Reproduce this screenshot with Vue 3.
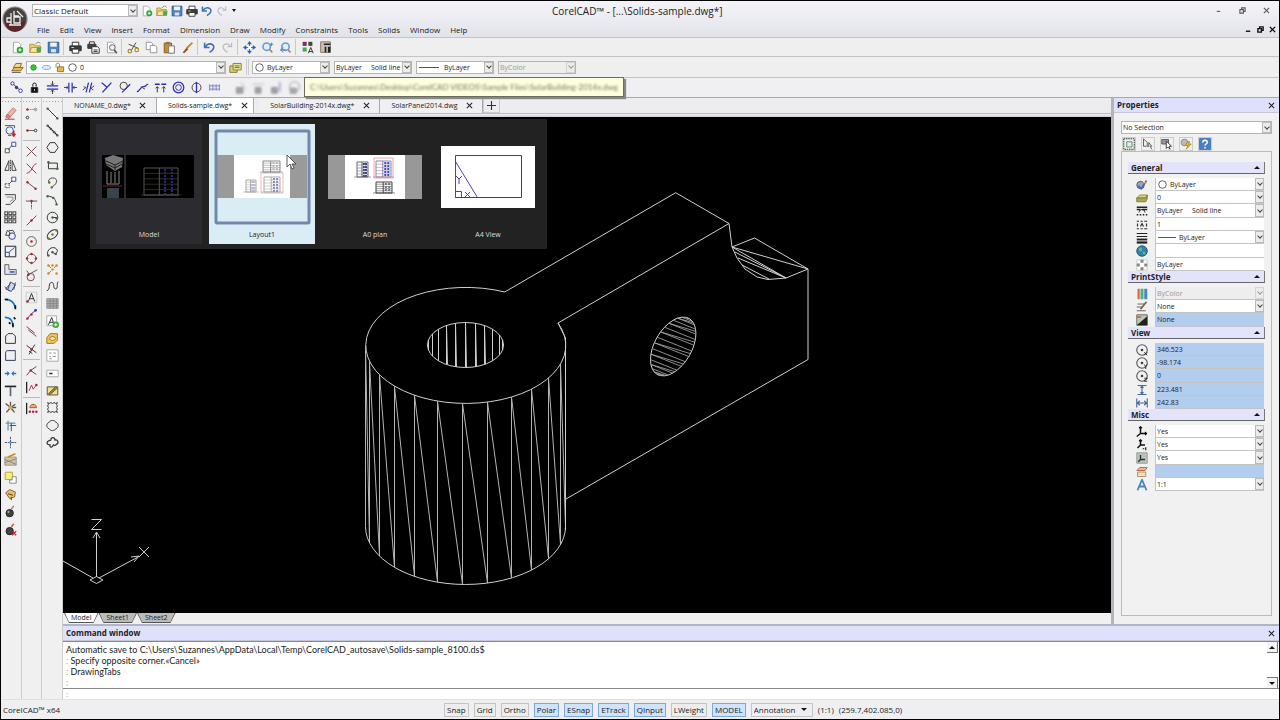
<script setup>
const menus = ['File', 'Edit', 'View', 'Insert', 'Format', 'Dimension', 'Draw', 'Modify', 'Constraints', 'Tools', 'Solids', 'Window', 'Help']

const page = '<path d="M3 1.5h6l3 3v10H3z" fill="#fff" stroke="#a9a9a9"/>'
const dots = (list, color) => list.map(([x, y]) => `<circle cx="${x}" cy="${y}" r="1.5" fill="${color}" stroke="none"/>`).join('')

const icons = {
  new: page + '<circle cx="11" cy="11" r="4" fill="#2fa33c" stroke="none"/><path d="M11 9v4M9 11h4" stroke="#fff"/>',
  open: '<path d="M1 4h5l1 2h7v8H1z" fill="#e8cf78" stroke="#b79a3e"/><path d="M3 8h12l-2 6H1z" fill="#f5e6a8" stroke="#b79a3e"/><circle cx="12" cy="11" r="3" fill="#4aa84a" stroke="none"/><path d="M8 4c2-3 4-3 6-1" stroke="#777"/>',
  save: '<path d="M1.5 1.5h13v13h-13z" fill="#4f86bd" stroke="#2c5f94"/><path d="M4 2h8v5H4z" fill="#eef5fb" stroke="none"/><path d="M5 10h6v4H5z" fill="#dce6ef" stroke="none"/>',
  print: '<path d="M4 6V1.5h8V6" fill="#fff"/><path d="M1 6h14v6H1z" fill="#3c3c3c"/><path d="M4 10h8v5H4z" fill="#fff"/><path d="M3 8h3" stroke="#ddd"/>',
  batch: '<path d="M3 4V1h6v3" fill="#fff"/><path d="M1 4h10v5H1z" fill="#444"/><path d="M6 7h7l2 2v6H6z" fill="#fff"/><path d="M8 11h5M8 13h5"/>',
  preview: page + '<circle cx="9" cy="8" r="3.5" stroke="#666" fill="#eef"/><path d="M11.5 11l3 4" stroke="#555" stroke-width="2"/>',
  cut: '<path d="M2 4l12 5M5 12l6-10" stroke="#4c4c44"/><circle cx="3.5" cy="12.5" r="2.2" stroke="#b18b2c" stroke-width="1.5"/><circle cx="12" cy="11" r="2.2" stroke="#b18b2c" stroke-width="1.5"/>',
  copy: '<path d="M1.5 1.5h6l2 2v7h-8z" fill="#fff" stroke="#999"/><path d="M6.5 5.5h6l2 2v7h-8z" fill="#fff" stroke="#999"/>',
  paste: '<path d="M1.5 2.5h9v12h-9z" fill="#c98d2b" stroke="#8c5d14"/><path d="M4 1h4v3H4z" fill="#777" stroke="none"/><path d="M7 6h7v9H7z" fill="#fff" stroke="#777"/>',
  brush: '<path d="M14 2L7 9" stroke="#c98b32" stroke-width="2.5"/><path d="M7 8l-5 6 2 1 5-5z" fill="#8b5a2b" stroke="none"/>',
  undo: '<path d="M2 2v6h6" stroke="#3b6fb5" stroke-width="2"/><path d="M3 7c4-6 12-3 10 2-1 3-3 4-5 5" stroke="#3b6fb5" stroke-width="2"/>',
  redo: '<path d="M13 2v5H8" stroke="#b9bcc2" stroke-width="1.5"/><path d="M12 7C8 1 1 4 3 9c1 3 3 4 5 5" stroke="#b9bcc2" stroke-width="1.5"/>',
  pan: '<path d="M8 1v14M1 8h14" stroke="#2a62b8"/><path d="M8 0l3 4H5zM8 16l3-4H5zM0 8l4-3v6zM16 8l-4-3v6z" fill="#2a62b8" stroke="none"/><path d="M6 6h4v4H6z" fill="#fff" stroke="none"/>',
  zoom: '<circle cx="7" cy="7" r="4.5" stroke="#6b9bd4" fill="#e2f0fc" stroke-width="2"/><path d="M10.5 10.5L14 14" stroke="#c47b4a" stroke-width="2"/><path d="M13 2v4M11 4h4" stroke="#4b83c4"/>',
  zoomPrev: '<circle cx="8" cy="7" r="4.5" stroke="#6b9bd4" fill="#e2f0fc" stroke-width="2"/><path d="M11 10.5L14 14" stroke="#c47b4a" stroke-width="2"/><path d="M2 11h6M2 11l3-3M2 11l3 3" stroke="#3b6fb5"/>',
  props: '<path d="M2 1h5v5H2z" fill="#7a2d6b" stroke="none"/><path d="M9 1h5v5H9z" fill="#444" stroke="none"/><path d="M2 8h5v5H2z" fill="#4aa84a" stroke="none"/><path d="M9 15l3-7 3 7M10 13h4" stroke="#333"/>',
  palette: '<path d="M2 1h12v13H2z" fill="#c9bfb2" stroke="#8a7c6a"/><path d="M6 3h8v2H6zM7 7h2v7H7zM11 7h3v7h-3z" fill="#222" stroke="none"/>',
  layers: '<path d="M1 12l3-4h11l-3 4z" fill="#e0b85a" stroke="#8a6a20"/><path d="M3 8l3-5h7l-2 5z" fill="#f2d58c" stroke="#8a6a20"/><path d="M1 14h11" stroke="#555"/>',
  layerTool: '<path d="M1 6h9v8H1z" fill="#d6cf7c" stroke="#8a8030"/><path d="M5 3h10v8H5z" fill="#e8e2a0" stroke="#8a8030"/><path d="M7 6h6M7 8h6" stroke="#4a8a4a"/>',
  oval: '<ellipse cx="8" cy="8" rx="6" ry="3" fill="#d5edf8" stroke="#6aa5cc"/>',
  unlock: '<path d="M5 7h9v7H5z" fill="#e5b94d" stroke="#8c6a1c"/><path d="M3 8V4c0-3 5-3 5 0v3" stroke="#7b6a3a"/>',
  circle: '<circle cx="8" cy="8" r="5.5" fill="#fff" stroke="#444"/>',
  green: '<circle cx="8" cy="8" r="4" fill="#37c53e" stroke="#158c20"/>',
  c1: '<path d="M2 2l12 11" stroke="#3333aa"/><circle cx="3" cy="3" r="2" fill="#fff" stroke="#3333aa"/><circle cx="8" cy="8" r="1.5" fill="#3333aa"/><circle cx="13" cy="12" r="2.2" fill="#fff" stroke="#3333aa"/>',
  c2: '<path d="M4 8h8v6H4z" fill="#111"/><path d="M6 7V4c0-2 4-2 4 0v3" stroke="#111"/><path d="M8 10v2" stroke="#eee"/>',
  c3: '<path d="M1 6h14M1 10h14" stroke="#2b2bb0" stroke-width="1.5"/><path d="M8 0v5M8 16v-5M6 3l2 2 2-2M6 13l2-2 2 2" stroke="#444"/>',
  c4: '<path d="M6 2v12M10 2v12" stroke="#2b2bb0" stroke-width="1.5"/><path d="M0 8h5M16 8h-5M3 6l2 2-2 2M13 6l-2 2 2 2" stroke="#444"/>',
  c5: '<path d="M5 14l3-12M9 14l3-12" stroke="#2b2bb0" stroke-width="1.5"/><path d="M1 11l4-3M11 9l4-3M2 7l3 1M14 11l-3-2" stroke="#444"/>',
  c6: '<path d="M2 2l7 6M14 2L3 14" stroke="#2b2bb0" stroke-width="1.6"/>',
  c7: '<circle cx="7" cy="6" r="4.5" stroke="#444"/><path d="M15 4L5 14" stroke="#2b2bb0" stroke-width="1.5"/>',
  c8: '<path d="M1 13c4 0 4-6 8-6s3-3 6-3" stroke="#2b2bb0" stroke-width="1.5"/><path d="M6 7l5 3" stroke="#444"/>',
  c9: '<path d="M1 4h6M9 4h6" stroke="#2b2bb0" stroke-width="1.6"/><path d="M4 14V7M12 14V7M2 9l2-2 2 2M10 9l2-2 2 2" stroke="#333"/>',
  c10: '<circle cx="8" cy="8" r="6.5" stroke="#3333aa" stroke-width="1.6"/><circle cx="8" cy="8" r="3.5" stroke="#3333aa"/>',
  c11: '<circle cx="8" cy="8" r="5.5" stroke="#444"/><path d="M8 1v14" stroke="#2b2bb0" stroke-width="1.6"/>',
  c12: '<path d="M2 4v8M6 4v8M10 4v8M14 4v8M2 6h12M2 10h12" stroke="#8080d0"/>',
  lock1: '<path d="M3 8h8v7H3z" fill="#555"/><path d="M9 2l3 5 3 3" stroke="#77a"/>',
  lock2: '<path d="M4 8h7v7H4z" fill="#555"/><path d="M1 4h14" stroke="#77a"/>',
  lock3: '<path d="M2 8h7v7H2z" fill="#555"/><path d="M12 1v12" stroke="#55b" stroke-width="2"/>',
  lock4: '<circle cx="8" cy="7" r="6" stroke="#889" stroke-width="2"/><path d="M3 9h7v6H3z" fill="#666"/>',
  erase: '<path d="M4 9l7-8 4 3-7 8z" fill="#efb1a6" stroke="#c78a7c"/><path d="M4 9l4 3-2 2-4-2z" fill="#d98a7c" stroke="#b76a5c"/><path d="M1 15h12" stroke="#a33"/>',
  lens: '<circle cx="7" cy="8" r="4.5" stroke="#2b5fb0"/><path d="M1 2h12v3M5 14h4" stroke="#555"/><path d="M12 8v6M10 12l2 3 2-3" stroke="#c22" stroke-width="1.8"/>',
  move: '<path d="M1.5 9.5h5v5h-5z" stroke="#555" fill="#fff"/><path d="M9.5 1.5h5v5h-5z" stroke="#3a4ab0" fill="#fff"/><path d="M5 11l5-6" stroke="#555"/>',
  mirror: '<path d="M1 14L6 2v12z" stroke="#444"/><path d="M15 14L10 2v12z" stroke="#444"/><path d="M8 1v14" stroke="#444" stroke-dasharray="2 1"/>',
  copyObj: '<path d="M1.5 9.5h5v5h-5z" stroke="#555" stroke-dasharray="2 1"/><path d="M9.5 1.5h5v5h-5z" stroke="#3a4ab0" fill="#fff"/><path d="M6 10l4-4" stroke="#555"/>',
  offset: '<path d="M1 2h13v6l-6 6H2" stroke="#444"/><path d="M3 5h8v3l-4 3" stroke="#888"/>',
  array: [0, 1, 2].map(r => [0, 1, 2].map(c => `<rect x="${1 + c * 5}" y="${1 + r * 5}" width="3.5" height="3.5" stroke="#444"/>`).join('')).join(''),
  rotate: '<circle cx="10" cy="10" r="4" stroke="#333a99" fill="#eef"/><path d="M2 9h5V5l-3-2zM6 3h5l2 3" stroke="#444"/>',
  scale: '<path d="M1.5 1.5h13v13h-13z" stroke="#222"/><path d="M1.5 9h5v5.5M6 9l7-6" stroke="#3a4ab0"/>',
  stretch: '<path d="M1 2h5v6h9v6H1z" stroke="#666" fill="#dfe3ee"/><path d="M7 11h6" stroke="#3a4ab0" stroke-width="1.8"/>',
  edit: '<path d="M2 11l7-8 5 3-5 8z" stroke="#3a4ab0" fill="#cfd5f3"/><path d="M1 8l6 6M8 2l-3 9M14 3l-2 9" stroke="#445"/>',
  arc1: '<path d="M1 3c7 0 12 4 13 11" stroke="#1e78c8" stroke-width="2.2"/><path d="M1 3h4M14 10v5" stroke="#111" stroke-width="2"/>',
  arc2: '<path d="M1 3c7 0 10 4 10 11" stroke="#1e78c8" stroke-width="2.2"/><path d="M12 3l2 2M6 9l2 2M11 10v5" stroke="#111" stroke-width="2"/>',
  cham: '<path d="M2 14V5l3-3h6l3 3v9z" stroke="#333"/>',
  fillet: '<path d="M14 14H2V5c0-3 2-3 4-3h8z" stroke="#335"/><path d="M14 3v10" stroke="#39f" stroke-dasharray="2 1"/>',
  join: '<path d="M1 8h5M15 8h-5" stroke="#2a6fc0" stroke-width="2"/><path d="M4 5l3 3-3 3M12 5L9 8l3 3" fill="#2a6fc0" stroke="none"/>',
  trim: '<path d="M1 3h14" stroke="#222" stroke-width="2"/><path d="M8 4v11" stroke="#567" stroke-width="2"/>',
  explode: '<path d="M8 8L2 3M8 8l6-4M8 8L3 14M8 8l5 6M8 8V1M8 8h7" stroke="#555" stroke-width="1.6"/><circle cx="8" cy="8" r="2.5" fill="#d9a441" stroke="none"/>',
  split: '<path d="M2 5h12M5 2v12" stroke="#69b" stroke-width="1.6"/><path d="M7 8h8M9 5v10" stroke="#456"/>',
  brk: '<path d="M8 1v14M1 8h14" stroke="#556" stroke-dasharray="3 1"/><path d="M6 8h4" stroke="#39f" stroke-width="2"/>',
  hatchEd: '<path d="M1 5h14v10H1z" fill="#cfc3a4" stroke="#998"/><path d="M1 8l14 6M1 12l14-5" stroke="#887"/><path d="M5 5l9-4" stroke="#d08a1e" stroke-width="2"/>',
  order: '<path d="M1.5 1.5h9v9h-9z" fill="#f6ef7a" stroke="#b3ab3a"/><path d="M10 7h5v8H7v-4h3z" fill="#fff" stroke="#889"/>',
  tag: '<path d="M2 6l5-4 7 3-1 6-6 2z" fill="#e6c071" stroke="#8a6526"/><path d="M5 7l6 2M9 11v4" stroke="#5a3b10"/>',
  bomb: '<circle cx="7" cy="10" r="4.5" fill="#444" stroke="#222"/><path d="M9 5l3-4" stroke="#a77" stroke-width="1.6"/><circle cx="5.5" cy="8.5" r="1.3" fill="#aaa" stroke="none"/>',
  bombX: '<circle cx="7" cy="10" r="4.5" fill="#444" stroke="#222"/><path d="M9 5l3-4" stroke="#c63" stroke-width="2"/><path d="M10 10l5 5M15 10l-5 5" stroke="#c22" stroke-width="1.6"/>',
  s1: '<path d="M3 3h10" stroke="#888" stroke-dasharray="2 1"/>' + dots([[3, 3]], '#b02030') + '<circle cx="3" cy="13" r="1.6"/><circle cx="13" cy="3" r="1.6" stroke="#888"/>',
  s2: '<path d="M3 8h10" stroke="#666"/>' + dots([[3, 8]], '#b02030') + '<circle cx="13" cy="8" r="1.6" fill="#fff"/>',
  s3: '<path d="M2 2l12 12M14 2L2 14" stroke="#555"/><path d="M6 10l4-4" stroke="#b04050"/>',
  s4: '<path d="M2 2l12 12" stroke="#555"/><path d="M14 2C8 4 10 12 2 14" stroke="#b03050"/>',
  s5: '<path d="M3 4l10 8" stroke="#555"/>' + dots([[3, 4], [13, 12]], '#b02050'),
  s6: '<path d="M1 5h14" stroke="#555"/><path d="M8 6v9" stroke="#555" stroke-dasharray="3 1"/>' + dots([[8, 5]], '#b02030'),
  s7: '<path d="M2 14L14 2" stroke="#555"/>' + dots([[8, 8]], '#b02030'),
  s8: '<circle cx="8" cy="8" r="6" stroke="#664"/>' + dots([[8, 8]], '#b02030'),
  s9: '<circle cx="8" cy="8" r="5.5" stroke="#664"/>' + dots([[8, 2.5], [8, 13.5], [2.5, 8], [13.5, 8]], '#c02040'),
  s10: '<circle cx="7" cy="10" r="4.5" stroke="#804040"/><path d="M2 2l4 5M15 1L4 7" stroke="#555"/>' + dots([[4, 7]], '#b02030'),
  s11: '<path d="M1.5 1.5h13v13h-13z" stroke="#ccc"/><path d="M4 13L8 3l4 10M5.5 9.5h5" stroke="#333"/>' + dots([[3, 13]], '#b02030'),
  s12: '<path d="M2 14l6-7 6-5" stroke="#445"/>' + dots([[8, 8], [3, 13]], '#c02050') + '<circle cx="13" cy="3" r="1.7" fill="#33c" stroke="none"/>',
  s13: '<path d="M2 2l10 8M4 6l10 8" stroke="#804050"/>',
  s14: '<path d="M2 3l12 9M12 2L5 14M5 10l4 3" stroke="#333"/>' + dots([[8, 8]], '#b02030'),
  s15: '<path d="M2 14l5-6 7-5M7 8l7 5" stroke="#704050"/>' + dots([[7, 8]], '#b02030'),
  s16: '<path d="M2 1v14" stroke="#222" stroke-width="1.6"/><path d="M5 12l3-7 2 5 4-5" stroke="#b03050"/>' + dots([[14, 5]], '#b02030'),
  s17: '<path d="M2 1v14" stroke="#222" stroke-width="1.6"/><path d="M6 7c0-6 9-5 8 0H6z" fill="#e8b080" stroke="#b05030"/>' + dots([[6, 12], [10, 12], [14, 12]], '#b02050'),
  d1: '<path d="M2 2l12 12" stroke="#333"/>' + dots([[2, 2], [14, 14]], '#3b6b3b'),
  d2: '<path d="M2 2l12 12" stroke="#222" stroke-width="1.5"/>' + dots([[2, 2], [6, 6], [10, 10], [14, 14]], '#555'),
  d3: '<path d="M5 2h6l4 6-4 6H5L1 8z" stroke="#333"/>',
  d4: '<path d="M3 5h11v7H3z" stroke="#333"/>' + dots([[3, 4], [14, 12]], '#3b6b3b'),
  d5: '<path d="M4 9c-4-8 10-9 9-2-1 4-4 5-6 7" stroke="#444"/>' + dots([[4, 8], [7, 14]], '#786a3b'),
  d6: '<path d="M2 4c6 0 10 3 11 10" stroke="#333"/>' + dots([[2, 4], [9, 6], [13, 14]], '#3b6b3b'),
  d7: '<circle cx="8" cy="8" r="6.5" stroke="#333"/><path d="M8 8h5" stroke="#333"/>' + dots([[8, 8], [13, 9]], '#3b6b3b'),
  d8: '<ellipse cx="8" cy="8" rx="7.5" ry="4.5" transform="rotate(-38 8 8)" stroke="#333"/>' + dots([[8, 8], [13, 3], [3, 13]], '#6b7a3b'),
  d9: '<path d="M2 13C0 3 12 0 14 7c0 4-5 5-6 1" stroke="#333"/>' + dots([[8, 9], [3, 13], [12, 11]], '#555'),
  d10: dots([[3, 3], [13, 3], [8, 8], [3, 13], [13, 13], [8, 3]], '#c58a2c') + '<path d="M4 4l2 2M12 4l-2 2M4 12l2-2" stroke="#865"/>',
  d11: '<path d="M1 13c5 0 1-10 6-10 4 0 1 8 5 8 3 0 1-8 3-9" stroke="#333"/>',
  d12: '<path d="M1 2h14v12H1z" fill="#aaa" stroke="#999"/><path d="M1 5h14M1 8h14M1 11h14M5 2v12M9 2v12M13 2v12" stroke="#8c8c8c"/>',
  d13: '<path d="M1 1h12v12H1z" fill="#fff" stroke="#aaa"/><path d="M3 12L7 3l3 9M4 9h5" stroke="#333"/><circle cx="12" cy="12" r="4" fill="#3cab3c" stroke="none"/><path d="M12 10v4M10 12h4" stroke="#fff"/>',
  d14: '<path d="M5 2h9v8l-4 4H1V7z" fill="#eec45c" stroke="#a77a1c"/><ellipse cx="8" cy="8" rx="3.5" ry="2.5" fill="#fbe9a8" stroke="#a77a1c"/>',
  d15: '<path d="M1 1h14v14H1z" fill="#fff" stroke="#aaa"/><path d="M4 5h3M9 5h3M4 9h2M8 9h4M4 12h3" stroke="#888"/>',
  d16: '<path d="M1 4h14v8H1z" fill="#fff" stroke="#aaa"/><path d="M4 8h4" stroke="#333" stroke-width="2"/>',
  d17: '<path d="M1.5 3.5h13v10h-13z" fill="#efe08a" stroke="#555"/><path d="M3 12l9-9 2 2-9 8z" fill="#a67c2c" stroke="#664"/>',
  d18: '<path d="M2 2l2 1 2-1 2 1 2-1 2 1 2-1-1 2 1 2-1 2 1 2-1 2 1 2-2-1-2 1-2-1-2 1-2-1-2 1 1-2-1-2 1-2-1-2 1-2z" stroke="#333"/>',
  d19: '<path d="M4 4c1-3 7-3 8 0 4 1 4 7 0 8-1 3-7 3-8 0-4-1-4-7 0-8z" stroke="#333"/>',
  d20: '<path d="M6 5c0-4 5-4 5 0 4-1 5 4 2 5-1 2-3 2-4 1-1 4-5 3-4 0-5 0-5-5 1-6z" stroke="#333" stroke-width="1.5"/>',
  p1: '<path d="M1 1h14v14H1z" stroke="#222" stroke-dasharray="2 1"/><path d="M5 5h7v7H5z" fill="#dff0e4" stroke="#4c8a68"/>',
  p2: '<path d="M2 1v10h4M2 1l5 5v6M9 6l4 5h-2l2 4M9 6v6" stroke="#555"/>',
  p3: '<path d="M1 2h9v6H1z" fill="#999" stroke="#555"/><path d="M7 4l7 7h-3l1 4-3-3-2 2z" fill="#fff" stroke="#333"/>',
  p4: '<circle cx="6" cy="6" r="4.5" fill="#bbb" stroke="#888"/><path d="M10 5l-3 5h4l-3 5 7-7h-4l2-3z" fill="#e9c53a" stroke="#a8881c"/>',
  p5: '<rect x="0" y="0" width="16" height="16" rx="1" fill="#4a80bd" stroke="none"/><path d="M5 6c0-4 6-4 6 0 0 2-3 2-3 4M8 12v2" stroke="#fff" stroke-width="2"/>',
  g1: '<circle cx="6" cy="8" r="5" fill="#9aa3b8" stroke="#556"/><path d="M3 9l4 4 7-11" stroke="#3a63b8" stroke-width="2"/><path d="M9 5h5" stroke="#d7a63a" stroke-width="2"/>',
  g2: '<path d="M1 8l4-4h10l-2 4z" fill="#d9d48a" stroke="#8a8a3a"/><path d="M1 8h12l2-4v5l-2 4H1z" fill="#a8ab55" stroke="#777a2c"/>',
  g3: '<path d="M1 3h14M1 6h5M8 6h7M1 13h2M5 13h2M9 13h2M13 13h2" stroke="#222" stroke-width="1.8"/><path d="M4 10a4 4 0 018 0" stroke="#222"/>',
  g4: '<path d="M1 3h3M6 3h3M11 3h4M1 13h3M6 13h3M11 13h4M2 10V6M6 10l2-4 2 4M14 10V6" stroke="#333" stroke-width="1.6"/>',
  g5: '<path d="M1 2h14M1 6h14" stroke="#222" stroke-width="1.5"/><path d="M1 10h14" stroke="#222" stroke-width="2.5"/><path d="M1 14h14" stroke="#222" stroke-width="3"/>',
  g6: '<circle cx="8" cy="8" r="7" fill="#2a86b0" stroke="#1c4f70"/><path d="M4 4c3-2 5 1 4 3S5 9 4 7zM9 9c3-1 4 1 3 3s-3 1-3-3z" fill="#6cba72" stroke="none"/>',
  g7: '<path d="M1 1h14v14H1z" fill="#fff" stroke="#ccc"/><path d="M6 1h4v4H6zM1 6h4v4H1zM11 6h4v4h-4zM6 11h4v4H6z" fill="#888" stroke="none"/>',
  h1: '<path d="M2 1h3v14H2z" fill="#d9694c" stroke="none"/><path d="M6 1h4v14H6z" fill="#5cae6b" stroke="none"/><path d="M11 1h4v14h-4z" fill="#3e8bc9" stroke="none"/>',
  h2: '<path d="M2 4h9M1 8h8M1 13h12" stroke="#555"/><path d="M14 1L6 11" stroke="#786233" stroke-width="2.2"/>',
  h3: '<path d="M1 1h14v14H1z" fill="#b9c9b0" stroke="#666"/><path d="M1 15L15 3v12z" fill="#222" stroke="none"/><path d="M1 4h6" stroke="#c55" stroke-width="2"/>',
  v1: '<circle cx="8" cy="8" r="7" stroke="#555" stroke-width="1.5"/><circle cx="8" cy="8" r="1.2" fill="#222"/><path d="M11 11l4 4M15 11l-4 4" stroke="#222"/>',
  v2: '<circle cx="8" cy="8" r="7" stroke="#555" stroke-width="1.5"/><circle cx="8" cy="8" r="1.2" fill="#222"/><path d="M11 10l2 3 2-3M13 13v3" stroke="#222"/>',
  v3: '<circle cx="8" cy="8" r="7" stroke="#555" stroke-width="1.5"/><circle cx="8" cy="8" r="1.2" fill="#222"/><path d="M11 11h4l-4 4h4" stroke="#222"/>',
  v4: '<path d="M2 2h12M2 14h12M8 3v10M6 5l2-2 2 2M6 11l2 2 2-2" stroke="#47689c" stroke-width="1.5"/>',
  v5: '<path d="M1 2v12M15 2v12M2 8h12M5 5L2 8l3 3M11 5l3 3-3 3" stroke="#47689c" stroke-width="1.5"/>',
  m1: '<path d="M6 1v9h8M6 10l-5 4" stroke="#111" stroke-width="2"/><path d="M4 3l2-2 2 2M12 8l2 2-2 2" stroke="#111" stroke-width="1.5"/>',
  m2: '<path d="M6 1v7h6M6 8l-4 4" stroke="#111" stroke-width="2"/><path d="M9 13h2M13 11v4M4 3l2-2 2 2" stroke="#111" stroke-width="1.5"/>',
  m3: '<path d="M1 1h14v14H1z" fill="#b9c4b4" stroke="#999"/><path d="M6 4v6h6M6 10l-3 3" stroke="#234" stroke-width="1.8"/>',
  m4: '<path d="M1 6l4-4h10l-3 4z" fill="#f1b48c" stroke="#a65"/><path d="M2 8h11v6H2z" fill="#f3e2b0" stroke="#a86"/>',
  m5: '<path d="M2 15L8 1l6 14M4 10h8" stroke="#4b83bb" stroke-width="2.4"/>'
}

const bar1 = [['new', 'open', 'save'], ['print', 'batch', 'preview'], ['cut', 'copy', 'paste', 'brush'], ['undo', 'redo'], ['pan', 'zoom', 'zoomPrev'], ['props', 'palette']]
const quick = ['new', 'open', 'save', 'print', 'undo', 'redo']
const bar3 = ['c1', 'c2', 'c3', 'c4', 'c5', 'c6', 'c7', 'c8', 'c9', 'c10', 'c11', 'c12']
const bar3Locked = ['lock1', 'lock2', 'lock3', 'lock4']
const modify = ['erase', 'lens', 'move', 'mirror', 'copyObj', 'offset', 'array', 'rotate', 'scale', 'stretch', 'edit', 'arc1', 'arc2', 'cham', 'fillet', 'join', 'trim', 'explode', 'split', 'brk', 'hatchEd', 'order', 'tag', 'bomb', 'bombX']
const snaps = [['s1', 's2'], ['s3', 's4', 's5', 's6', 's7'], ['s8', 's9', 's10'], ['s11', 's12', 's13', 's14'], ['s15', 's16'], ['s17']]
const draws = Array.from({ length: 20 }, (_, i) => 'd' + (i + 1))

const files = [
  { name: 'NONAME_0.dwg*' },
  { name: 'Solids-sample.dwg*', active: true },
  { name: 'SolarBuilding-2014x.dwg*' },
  { name: 'SolarPanel2014.dwg' }
]

const sections = [
  { title: 'General', rows: [
    { icon: 'g1', label: 'Line color', value: 'ByLayer', select: true, mark: 'circle' },
    { icon: 'g2', label: 'Layer', value: '0', select: true },
    { icon: 'g3', label: 'Line style', value: 'ByLayer\u00a0\u00a0\u00a0\u00a0\u00a0Solid line', select: true },
    { icon: 'g4', label: 'Line scale', value: '1' },
    { icon: 'g5', label: 'Line weight', value: 'ByLayer', select: true, mark: 'line' },
    { icon: 'g6', label: 'Hyperlink', value: '' },
    { icon: 'g7', label: 'Transparency', value: 'ByLayer' }
  ] },
  { title: 'PrintStyle', rows: [
    { icon: 'h1', label: 'Print style', value: 'ByColor', select: true, off: true },
    { icon: 'h2', label: 'Print style table', value: 'None', select: true },
    { icon: 'h3', label: 'Attached to', value: 'None', blue: true }
  ] },
  { title: 'View', rows: [
    { icon: 'v1', label: 'Center X', value: '346.523', blue: true },
    { icon: 'v2', label: 'Center Y', value: '-98.174', blue: true },
    { icon: 'v3', label: 'Center Z', value: '0', blue: true },
    { icon: 'v4', label: 'Height', value: '223.481', blue: true },
    { icon: 'v5', label: 'Width', value: '242.83', blue: true }
  ] },
  { title: 'Misc', rows: [
    { icon: 'm1', label: 'CCS icon on', value: 'Yes', select: true },
    { icon: 'm2', label: 'CCS icon at origin', value: 'Yes', select: true },
    { icon: 'm3', label: 'CCS per tile', value: 'Yes', select: true },
    { icon: 'm4', label: 'CCS name', value: '', blue: true },
    { icon: 'm5', label: 'Annotation scale', value: '1:1', select: true }
  ] }
]

const toggles = [
  ['Snap'], ['Grid'], ['Ortho'], ['Polar', true], ['ESnap', true], ['ETrack', true], ['QInput', true], ['LWeight'], ['MODEL', true]
]

// Facet edges of the cylinder: verticals plus one diagonal per facet.
const cx = 465.5, rimY = 345.5, rx = 100, ry = 58, depth = 181
const rim = x => rimY + ry * Math.sqrt(Math.max(0, 1 - ((x - cx) / rx) ** 2))
const facetX = [365.5, 369.5, 379.5, 394.5, 414.5, 437.5, 462.5, 487.5, 511.5, 531.5, 548.5, 560.5, 565.5]
const facets = facetX.map((x, i) => {
  const n = facetX[i + 1]
  return `M${x} ${rim(x)}V${rim(x) + depth}` + (n ? `M${x} ${rim(x)}L${n} ${rim(n) + depth}` : '')
}).join('')

const boreX = [428.5, 432.5, 438.5, 446.5, 455.5, 465.5, 475.5, 484.5, 492.5, 499.5, 502.5]
const boreH = x => 22.5 * Math.sqrt(Math.max(0, 1 - ((x - cx) / 38) ** 2))
const bore = boreX.map(x => `M${x} ${345 - boreH(x)}V${345 + boreH(x)}`).join('') +
  boreX.slice(3, 8).map(x => `M${x} ${345 - boreH(x)}L${x + 1} ${345 + boreH(x + 1)}`).join('')

// Side hole: a circle seen on the isometric front face, with hatch chords.
const hole = t => [673.2 + 22.7 * Math.cos(t), 346.5 - 13.1 * Math.cos(t) + 26.3 * Math.sin(t)]
const holeRing = 'M' + Array.from({ length: 32 }, (_, i) => hole(i * Math.PI / 16).map(v => v.toFixed(1)).join(' ')).join('L') + 'Z'
const chord = (t, dx, dy) => {
  const [x, y] = hole(t)
  const ux = dx / 22.7, uy = (dy + 13.1 * dx / 22.7) / 26.3
  const k = -2 * (Math.cos(t) * ux + Math.sin(t) * uy) / (ux * ux + uy * uy)
  return k > 0 ? `M${x} ${y}L${x + k * dx} ${y + k * dy}` : ''
}
const holeHatch = Array.from({ length: 32 }, (_, i) => chord(i * Math.PI / 16, 10, 4) + (i % 2 ? chord(i * Math.PI / 16, 10, 3) : '')).join('')

const house = (x, y, w, h, a, b) =>
  `<path d="M${x} ${y}h${w}v${h}h${-w}z" fill="none" stroke="${a}"/>` +
  [1, 2, 3, 4].map(i => `<path d="M${x} ${y + h * i / 5}h${w}" stroke="${a}" stroke-opacity=".5"/>`).join('') +
  `<path d="M${x + w * 0.45} ${y}v${h}" stroke="${a}"/><path d="M${x + w * 0.62} ${y + 1}v${h - 1}M${x + w * 0.82} ${y + 1}v${h - 1}" stroke="${b}" stroke-width="2" stroke-dasharray="2 1"/><path d="M${x - 3} ${y + h}h${w + 6}" stroke="${a}" stroke-opacity=".6"/>`

const thumbs = [
  { name: 'Model', kind: 'dim', art: '<path d="M0 25h22v43H0zM24 25h68v43H24z" fill="#000"/><path d="M3 28l8-3 10 3-1 9-7 4-9-6z" fill="#777"/><path d="M4 31l9 4 8-4M4 34l9 4 7-4M13 35v5" stroke="#222" fill="none"/><path d="M5 41v13h12V41M9 42v11M13 42v11" stroke="#888" fill="none"/><path d="M5 58h12v10H5z" fill="#39434d"/><path d="M1 56h19" stroke="#702020"/>' + house(42, 38, 34, 27, '#56564c', '#2b2b78') },
  { name: 'Layout1', kind: 'picked', art: '<path d="M2 25h90v43H2z" fill="#9a9a9a"/><path d="M19 25h56v43H19z" fill="#fff"/><path d="M46 43h22v20H46z" fill="none" stroke="#f3b9b9"/>' + house(48, 31, 17, 11, '#888', '#bbb') + house(49, 47, 16, 15, '#aaa', '#8888bb') + house(31, 50, 10, 12, '#aaa', '#bbc') + '<rect x="1" y="1" width="93" height="92" fill="none" stroke="#7287ab" stroke-width="3" rx="1"/><path d="M72 25v12l3-3 2 5 2-1-2-4h4z" fill="#fff" stroke="#333" stroke-width=".8"/>' },
  { name: 'A0 plan', kind: '', art: '<path d="M0 25h94v44H0z" fill="#989898"/><path d="M17 25h60v44H17z" fill="#fff"/><path d="M46 28h19v20H46z" fill="none" stroke="#f3a8a8"/>' + house(29, 32, 11, 15, '#667', '#448') + house(48, 31, 15, 16, '#88a', '#4444bb') + house(48, 52, 16, 11, '#444', '#778') },
  { name: 'A4 View', kind: '', art: '<path d="M0 16h94v62H0z" fill="#fff"/><path d="M14.5 25.5h66v42h-66z" fill="none" stroke="#444"/><path d="M14.5 67.5v-36l22 36M14.5 61.5h6v6M24 62l5 5M29 62l-5 5M15 46l3 3 3-3M18 49v5" fill="none" stroke="#4a3fc0"/>' }
]
</script>

<template>
  <div class="app">
    <header class="head">
      <svg class="logo" viewBox="0 0 26 26"><circle cx="13" cy="13" r="12" fill="#46403f" stroke="#8b8786" /><path d="M3 16a10 10 0 0020 0z" fill="#5b2626" /><path d="M9 7v12M9 12H5v4h4M12 11h6v6h-6zM12 5v5h5M15 5l6 6M7 19h12" stroke="#eee" fill="none" stroke-width="1.3" /></svg>
      <div class="headmain">
        <div class="titlebar">
          <div class="combo workspace"><select aria-label="Workspace"><option>Classic Default</option></select><span class="arr"></span></div>
          <button v-for="q in quick" :key="q" class="qb" :aria-label="q"><svg viewBox="0 0 16 16" v-html="icons[q]"></svg></button>
          <button class="more" aria-label="More"><i class="down"></i></button>
          <h1>CorelCAD™ - [...\Solids-sample.dwg*]</h1>
          <div class="winbtns">
            <button aria-label="Minimize"><svg viewBox="0 0 8 8"><path d="M2 5h4" /></svg></button>
            <button aria-label="Restore"><svg viewBox="0 0 8 8"><path d="M1 3h4v4H1zM3 3V1h4v4H5" /></svg></button>
            <button aria-label="Close"><svg viewBox="0 0 8 8"><path d="M1 1l6 6M7 1L1 7" /></svg></button>
          </div>
        </div>
        <nav class="menubar">
          <a v-for="m in menus" :key="m" href="#">{{ m }}</a>
          <div class="winbtns doc">
            <button aria-label="Minimize drawing"><svg viewBox="0 0 8 8"><path d="M1 6h5" /></svg></button>
            <button aria-label="Restore drawing"><svg viewBox="0 0 8 8"><path d="M1 3h4v4H1zM3 3V1h4v4H5" /></svg></button>
            <button aria-label="Close drawing"><svg viewBox="0 0 8 8"><path d="M1 1l6 6M7 1L1 7" /></svg></button>
          </div>
        </nav>
      </div>
    </header>

    <div class="bar bar1">
      <div v-for="(g, i) in bar1" :key="i" class="group">
        <button v-for="n in g" :key="n" class="ib" :aria-label="n"><svg viewBox="0 0 16 16" v-html="icons[n]"></svg></button>
      </div>
    </div>

    <div class="bar bar2">
      <button class="ib" aria-label="Layers manager"><svg viewBox="0 0 16 16" v-html="icons.layers"></svg></button>
      <div class="combo layer">
        <svg v-for="n in ['green', 'oval', 'unlock', 'circle']" :key="n" class="mark" viewBox="0 0 16 16" v-html="icons[n]"></svg>
        <select aria-label="Active layer"><option>0</option></select><span class="arr"></span>
      </div>
      <button class="ib" aria-label="Layer tools"><svg viewBox="0 0 16 16" v-html="icons.layerTool"></svg></button>
      <i class="grip"></i>
      <div class="combo std"><svg class="mark" viewBox="0 0 16 16" v-html="icons.circle"></svg><select aria-label="Line color"><option>ByLayer</option></select><span class="arr"></span></div>
      <div class="combo std"><select aria-label="Line style"><option>ByLayer&nbsp;&nbsp;&nbsp;&nbsp;&nbsp;Solid line</option></select><span class="arr"></span></div>
      <div class="combo std"><i class="rule wide"></i><select aria-label="Line weight"><option>ByLayer</option></select><span class="arr"></span></div>
      <div class="combo std off"><select aria-label="Print style" disabled><option>ByColor</option></select><span class="arr"></span></div>
    </div>

    <div class="bar bar3">
      <button v-for="n in bar3" :key="n" class="ib" :aria-label="n"><svg viewBox="0 0 16 16" v-html="icons[n]"></svg></button>
      <div class="locked">
        <button v-for="n in bar3Locked" :key="n" class="ib" :aria-label="n"><svg viewBox="0 0 16 16" v-html="icons[n]"></svg></button>
      </div>
      <div class="tip"><span>C:\Users\Suzannes\Desktop\CorelCAD VIDEOS\Sample Files\SolarBuilding-2014x.dwg</span></div>
    </div>

    <div class="body">
      <aside class="tools">
        <div class="tcol">
          <button v-for="n in modify" :key="n" class="tb" :aria-label="n"><svg viewBox="0 0 16 16" v-html="icons[n]"></svg></button>
        </div>
        <div class="tcol snaps">
          <div v-for="(g, i) in snaps" :key="i" class="sgroup">
            <button v-for="n in g" :key="n" class="tb" :aria-label="n"><svg viewBox="0 0 16 16" v-html="icons[n]"></svg></button>
          </div>
        </div>
        <div class="tcol">
          <button v-for="n in draws" :key="n" class="tb" :aria-label="n"><svg viewBox="0 0 16 16" v-html="icons[n]"></svg></button>
        </div>
      </aside>

      <div class="work">
        <div class="upper">
          <main class="center">
            <div class="tabs">
              <div v-for="f in files" :key="f.name" class="tab" :class="{ active: f.active }">
                <span>{{ f.name }}</span>
                <button :aria-label="'Close ' + f.name"><svg viewBox="0 0 8 8"><path d="M1 1l6 6M7 1L1 7" /></svg></button>
              </div>
              <button class="plus" aria-label="New drawing"><svg viewBox="0 0 8 8"><path d="M4 0v8M0 4h8" /></svg></button>
            </div>
            <div class="canvas">
              <svg class="model">
                <g transform="translate(-63 -117)" fill="none" stroke="#cfcfcf">
                  <path d="M504.7 292L675.7 192.7 729 223.5 558 323M729 223.5l3 23.5 22.5-9L808 269v90.5L566 499" />
                  <path d="M732 247l5 11 8 11 12 8 11 2.5 18-1.5 22-9M732 247l76 22M732 247l54 31M738 258l48 20M742 265l27 14M735 252l51 26" />
                  <path d="M504.7 292A100 58 0 1 0 558 323" />
                  <path :d="facets" stroke="#b4b4b4" />
                  <path d="M365.5 526.5a100 58 0 0 0 200 0" />
                  <path d="M558 323l7.5 15v192" />
                  <ellipse cx="465.5" cy="345" rx="38" ry="22.5" />
                  <path :d="bore" />
                  <path :d="holeRing" /><path :d="holeHatch" stroke="#b0b0b0" stroke-width=".8" />
                  <path d="M96.5 577v-44M93 538l3.5-6 3.5 6M99 578l39-21M131 557l8-1-5 6M93 578L63 561M90 580l6.5-3.5 6.5 3.5-6.5 3.5z" />
                  <path d="M91.5 519.5h10l-10 10h10M139 547l10 10M149 547l-10 10" />
                </g>
              </svg>
              <div class="thumbs">
                <button v-for="t in thumbs" :key="t.name" class="thumb" :class="t.kind">
                  <svg viewBox="0 0 94 94" v-html="t.art"></svg>
                  <span>{{ t.name }}</span>
                </button>
              </div>
            </div>
            <div class="sheets">
              <button class="sheet on"><span>Model</span></button>
              <button class="sheet"><span>Sheet1</span></button>
              <button class="sheet"><span>Sheet2</span></button>
            </div>
          </main>

          <aside class="props">
            <div class="phead"><h2>Properties</h2><button aria-label="Close properties"><svg viewBox="0 0 8 8"><path d="M1 1l6 6M7 1L1 7" /></svg></button></div>
            <div class="pbody">
              <div class="combo"><select aria-label="Selection"><option>No Selection</option></select><span class="arr"></span></div>
              <div class="pbtns">
                <button v-for="n in ['p1', 'p2', 'p3', 'p4', 'p5']" :key="n" :aria-label="n"><svg viewBox="0 0 16 16" v-html="icons[n]"></svg></button>
              </div>
              <div class="plist">
                <section v-for="s in sections" :key="s.title">
                  <h3>{{ s.title }}<i class="up"></i></h3>
                  <div class="rows">
                    <div v-for="r in s.rows" :key="r.label" class="row">
                      <svg viewBox="0 0 16 16" v-html="icons[r.icon]"></svg>
                      <div class="field" :class="{ blue: r.blue, off: r.off }">
                        <svg v-if="r.mark === 'circle'" class="mark" viewBox="0 0 16 16" v-html="icons.circle"></svg>
                        <i v-if="r.mark === 'line'" class="rule"></i>
                        <template v-if="r.select"><select :aria-label="r.label" :disabled="r.off"><option>{{ r.value }}</option></select><span class="arr"></span></template>
                        <input v-else type="text" :aria-label="r.label" :value="r.value" :readonly="r.blue">
                      </div>
                    </div>
                  </div>
                </section>
              </div>
            </div>
          </aside>
        </div>

        <section class="command">
          <div class="phead"><h2>Command window</h2><button aria-label="Close command window"><svg viewBox="0 0 8 8"><path d="M1 1l6 6M7 1L1 7" /></svg></button></div>
          <div class="log">
            <div class="lines">
              <p>Automatic save to C:\Users\Suzannes\AppData\Local\Temp\CorelCAD_autosave\Solids-sample_8100.ds$</p>
              <p><i>:</i> Specify opposite corner.«Cancel»</p>
              <p><i>:</i> DrawingTabs</p>
              <p><i>:</i></p>
            </div>
            <div class="scroll">
              <button aria-label="Scroll up"><i class="up"></i></button>
              <button aria-label="Scroll down"><i class="down"></i></button>
            </div>
          </div>
          <label class="prompt"><span>:</span><input type="text" aria-label="Command"></label>
        </section>
      </div>
    </div>

    <footer class="status">
      <span class="ver">CorelCAD™ x64</span>
      <button v-for="[t, on] in toggles" :key="t" class="tog" :class="{ on }">{{ t }}</button>
      <div class="anno"><select aria-label="Annotation scale"><option>Annotation</option></select><i class="down"></i></div>
      <span>(1:1)</span>
      <span>(259.7,402.085,0)</span>
    </footer>
  </div>
</template>

<style>
html, body { margin: 0; background: #000; }
</style>

<style scoped>
* { box-sizing: border-box; }
.app { display: flex; flex-direction: column; min-height: 100vh; padding: 1px; background: #000; font: 8px/12px "Open Sans", "Noto Sans", sans-serif; color: #222; }
button, select, input { font: inherit; color: inherit; margin: 0; padding: 0; border: 0; background: none; border-radius: 0; }
button { display: flex; align-items: center; justify-content: center; }
svg { display: block; flex: none; fill: none; stroke: #333; stroke-width: 1.2; }
h1, h2, h3, p { margin: 0; font: inherit; }
i { font-style: normal; }
a { color: inherit; text-decoration: none; }

.head { display: flex; gap: 4px; height: 36px; padding-left: 1px; background: linear-gradient(#f4f4f8, #e2e3ea); }
.logo { width: 26px; height: 26px; margin-top: 5px; stroke: none; }
.headmain { flex: 1; }
.titlebar { display: flex; align-items: center; height: 19px; }
.workspace { width: 106px; margin-right: 1px; }
.qb { width: 15px; height: 15px; }
.qb svg { width: 12px; height: 12px; }
.more { width: 9px; height: 12px; }
h1 { flex: 1; font-size: 10px; padding-left: 314px; white-space: nowrap; }
.winbtns { display: flex; gap: 14px; padding-right: 8px; }
.winbtns button { width: 10px; height: 10px; }
.winbtns svg { width: 7px; height: 7px; stroke: #555; }
.menubar { display: flex; align-items: center; gap: 10px; height: 17px; padding: 2px 0 0 5px; }
.doc { margin-left: auto; gap: 2px; padding-right: 2px; }
.doc svg { stroke: #111; stroke-width: 1.6; }

.combo { display: flex; align-items: center; height: 13px; background: #fff; border: 1px solid #b4b4b8; }
.combo select, .field select { flex: 1; min-width: 0; width: 0; height: 11px; appearance: none; padding-left: 1px; line-height: 11px; }
.arr { display: flex; align-items: center; justify-content: center; width: 9px; height: 100%; flex: none; background: #ececec; border: 1px solid #bbb; pointer-events: none; }
.arr::after { content: ""; width: 3px; height: 3px; margin-bottom: 2px; border: solid #444; border-width: 0 1px 1px 0; transform: rotate(45deg); }
.mark { width: 13px; height: 11px; }
.rule { width: 18px; height: 1px; margin: 0 2px; background: #555; flex: none; }
.rule.wide { width: 20px; margin: 0 4px 0 2px; }
.off { background: #eee; color: #999; }
.off select { opacity: 1; color: #999; }
.off .arr { opacity: .5; }

.bar { display: flex; align-items: center; background: #efeff0; border-top: 1px solid #c4c4c8; padding-left: 7px; }
.bar1 { height: 19px; }
.bar2 { height: 21px; font-size: 7px; }
.bar3 { height: 20px; position: relative; padding-left: 6px; background: #f0f0f2; }
.ib { width: 18px; height: 16px; }
.ib svg { width: 13px; height: 13px; }
.group { display: flex; }
.group + .group { border-left: 1px solid #c8c8c8; margin-left: 1px; padding-left: 2px; }
.layer { width: 200px; }
.std { width: 78px; margin-right: 4px; }
.grip { width: 3px; height: 16px; margin: 0 3px 0 2px; border: solid #ccc; border-width: 0 1px; }
.locked { display: flex; margin-left: 8px; filter: blur(1px); opacity: .5; }
.tip { position: absolute; left: 303px; top: -1px; z-index: 3; height: 20px; display: flex; align-items: center; padding: 0 5px; background: #fdfde0; border: 1px solid #6b6b60; box-shadow: 2px 2px 1px #888; font-family: Lato, "Open Sans", sans-serif; }
.tip span { filter: blur(1px); color: #77775c; white-space: nowrap; }

.body { display: flex; flex: 1; background: #eee; border-top: 1px solid #aaa; }
.tools { display: flex; width: 62px; background: #f0f0f0; }
.tcol { flex: 1; display: flex; flex-direction: column; align-items: center; padding-top: 7px; border-right: 1px solid #ccc; background: radial-gradient(circle, #aaa 0, #aaa 1px, transparent 1px) 0 2px / 3px 3px repeat-x; }
.tb { width: 17px; height: 17px; }
.tb svg { width: 13px; height: 13px; }
.tcol > .tb:nth-child(3n), .sgroup .tb:nth-child(3n) { margin-bottom: 1px; }
.sgroup + .sgroup { border-top: 1px solid #bbb; margin-top: 1px; padding-top: 2px; }

.work { flex: 1; min-width: 0; display: flex; flex-direction: column; }
.upper { display: flex; flex: 1; }
.center { flex: 1; min-width: 0; display: flex; flex-direction: column; }
.tabs { display: flex; align-items: stretch; height: 19px; padding-bottom: 4px; background: linear-gradient(#ededf0 15px, #888 15px, #f2f2f2 16px, #ccd); font-size: 7px; }
.tab { display: flex; align-items: center; gap: 8px; padding: 0 9px 0 11px; background: #f0f0f3; border-right: 1px solid #aaa; }
.tab.active { background: #fff; margin-right: 5px; padding-right: 5px; }
.tab button, .phead button { width: 8px; height: 8px; }
.tab svg, .phead svg { width: 7px; height: 7px; stroke: #222; }
.plus { width: 17px; border: 1px solid #ccc; }
.plus svg { width: 9px; height: 9px; stroke: #333; stroke-width: 1; }
.canvas { flex: 1; position: relative; background: #000; overflow: hidden; }
.model { position: absolute; left: 0; top: 0; width: 100%; height: 100%; stroke-width: 1; }
.thumbs { position: absolute; left: 27px; top: 2px; display: flex; gap: 7px; padding: 5px 6px; background: #222; }
.thumb { flex-direction: column; justify-content: space-between; width: 106px; height: 120px; padding: 6px 0 3px; color: #ddd; font-size: 7px; }
.thumb svg { width: 94px; height: 94px; stroke: none; stroke-width: 1; overflow: visible; }
.dim { background: #2c2c30; }
.picked { background: #daedf5; color: #222; }

.sheets { display: flex; height: 11px; padding-left: 1px; background: #f0f0f0; font-size: 7px; line-height: 9px; }
.sheet { height: 10px; padding: 0 1px 1px; background: #555; clip-path: polygon(0 0, 100% 0, calc(100% - 5px) 100%, 5px 100%); }
.sheet span { padding: 0 7px; background: #bbb; clip-path: polygon(0 0, 100% 0, calc(100% - 4px) 100%, 4px 100%); }
.sheet.on span { padding: 0 6px; background: #fff; }

.props { display: flex; flex-direction: column; width: 168px; background: #f0f0f0; border-left: 3px solid #b4b4bc; }
.phead { display: flex; align-items: center; justify-content: space-between; height: 15px; padding: 0 4px 0 3px; background: #dfe1fb; font-weight: bold; border-bottom: 1px solid #c4c6d8; }
.pbody { flex: 1; display: flex; flex-direction: column; padding: 8px 7px; font-size: 7px; }
.pbtns { display: flex; gap: 5px; padding: 3px 0 0 1px; }
.pbtns button { width: 14px; height: 14px; border: 1px solid #ccc; }
.pbtns svg { width: 12px; height: 12px; }
.plist { flex: 1; padding: 10px 6px 0; border: 1px solid #bbb; background: #f1f1f1; }
h3 { display: flex; align-items: center; justify-content: space-between; height: 12px; padding: 0 4px 0 3px; background: #e3e4fb; border-bottom: 1px solid #666; border-right: 1px solid #777; font-weight: bold; font-size: 8px; }
.up { border: 3px solid transparent; border-top: 0; border-bottom-color: #111; }
.down { border: 3px solid transparent; border-bottom: 0; border-top-color: #111; }
.more .down { border-width: 3px 2px 0; }
.rows { padding: 4px 1px 0 0; }
.row { display: flex; align-items: center; height: 13px; padding-left: 8px; gap: 7px; }
.row:nth-child(3n) { height: 14px; }
.row > svg { width: 12px; height: 12px; }
.field { flex: 1; display: flex; align-items: center; height: 100%; background: #fff; border: solid #c4c4c4; border-width: 0 0 1px 1px; }
.field input { flex: 1; width: 0; padding-left: 1px; height: 100%; }
.field.blue { background: #b3cdee; }
.field.off { background: #eee; }

.command { background: #fff; border-top: 2px solid #b0b4c4; }
.log { display: flex; height: 48px; border: solid #888; border-width: 1px 0; font: 9px/11px Lato, "Liberation Sans", sans-serif; color: #222; }
.lines { flex: 1; padding: 2px 3px; }
.lines i { color: #aaa; }
.scroll { display: flex; flex-direction: column; justify-content: space-between; width: 11px; margin-right: 1px; }
.scroll button { height: 11px; border: solid #777; border-width: 0 1px 1px 0; background: #f4f4f4; }
.scroll button + button { border-width: 1px 1px 0 0; }
.prompt { display: flex; height: 10px; line-height: 9px; padding-left: 3px; color: #999; }
.prompt input { flex: 1; height: 9px; }

.status { display: flex; align-items: center; gap: 5px; height: 20px; padding: 0 2px; background: #efeff1; border-top: 1px solid #e0e0e0; }
.ver { width: 436px; }
.tog { height: 14px; padding: 0 2px; border: 1px solid #c4c4c4; background: #ededed; }
.tog.on { background: #cfe3fb; border-color: #7ea8dc; }
.anno { display: flex; align-items: center; width: 62px; height: 14px; padding-right: 5px; border: 1px solid #c4c4c4; }
.anno select { flex: 1; width: 0; appearance: none; padding-left: 2px; height: 12px; }
</style>
